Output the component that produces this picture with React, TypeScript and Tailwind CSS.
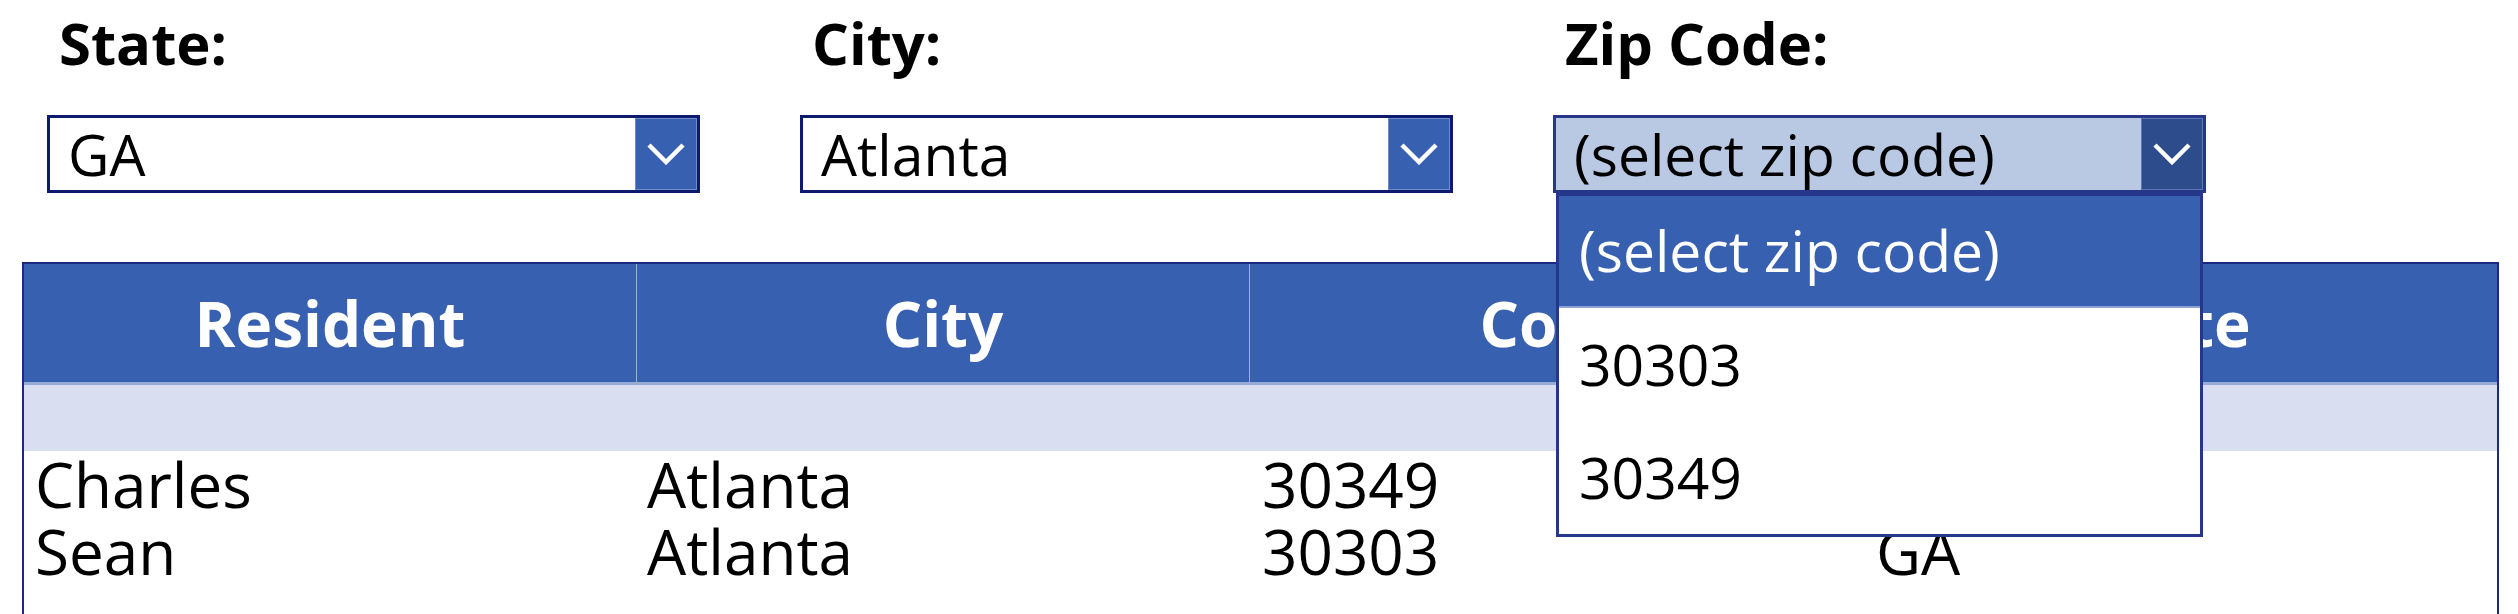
import React from "react"

const rows = [
  { resident: "Charles", city: "Atlanta", code: "30349", state: "GA" },
  { resident: "Sean", city: "Atlanta", code: "30303", state: "GA" },
]

const zipOptions = ["(select zip code)", "30303", "30349"]

const Chevron = () => (
  <svg width="38" height="22" viewBox="0 0 38 22" fill="none">
    <polyline points="2,2 19,19 36,2" stroke="white" strokeWidth="4.5" />
  </svg>
)

interface DropdownProps {
  label: string
  value: string
  open?: boolean
}

const Dropdown: React.FC<DropdownProps> = ({ label, value, open }) => {
  return (
    <div className="relative w-[653px]">
      <div className="pl-[12px] pt-[14px] text-[58px] font-bold leading-[58px] text-black">{label}</div>
      <div
        className={
          open
            ? "mt-[43px] flex h-[78px] border-[3px] border-[#26378a] bg-[#b9c9e3]"
            : "mt-[43px] flex h-[78px] border-[3px] border-[#0e1a6c] bg-white"
        }
      >
        <div className="flex flex-1 items-center pl-[18px] text-[57px] leading-none text-black">{value}</div>
        <div
          className={
            open
              ? "flex w-[62px] items-center justify-center border border-[#5a78b8] bg-[#2d4c8c]"
              : "flex w-[62px] items-center justify-center border border-[#6f8cc8] bg-[#3860b0]"
          }
        >
          <Chevron />
        </div>
      </div>
      {open && (
        <div className="absolute left-[3px] right-[3px] top-[193px] z-10 flex flex-col border-[3px] border-[#26378a] bg-white">
          {zipOptions.map((opt, i) => (
            <div
              key={opt}
              className={
                i === 0
                  ? "flex h-[112px] items-center border-b-2 border-[#8ea2d2] bg-[#3860b0] pl-[20px] text-[57px] text-white"
                  : "flex h-[113px] items-center pl-[20px] text-[57px] text-black"
              }
            >
              {opt}
            </div>
          ))}
        </div>
      )}
    </div>
  )
}

export default function App() {
  return (
    <div className="relative h-[614px] w-[2518px] overflow-hidden bg-white font-['Open_Sans',sans-serif]">
      <div className="flex gap-[100px] pl-[47px]">
        <Dropdown label="State:" value="GA" />
        <Dropdown label="City:" value="Atlanta" />
        <Dropdown label="Zip Code:" value="(select zip code)" open />
      </div>

      <div className="ml-[22px] mt-[69px] h-[400px] w-[2477px] border-x-2 border-t-2 border-[#1b2a80]">
        <div className="grid h-[121px] grid-cols-[612px_613px_614px_612px_1fr] border-b-[3px] border-[#98aad6] bg-[#3860b0] text-[62px] font-bold text-white">
          <div className="flex items-center justify-center">Resident</div>
          <div className="flex items-center justify-center border-l border-[#9db0dc]">City</div>
          <div className="flex items-center justify-center border-l border-[#9db0dc]">Code</div>
          <div className="flex items-center justify-center border-l border-[#9db0dc]">State</div>
          <div />
        </div>
        <div className="h-[66px] bg-[#d9dff0]" />
        <div className="flex flex-col">
          {rows.map((r) => (
            <div
              key={r.resident}
              className="grid grid-cols-[612px_613px_614px_1fr] text-[62px] leading-[67px] text-black"
            >
              <div className="pl-[11px]">{r.resident}</div>
              <div className="pl-[11px]">{r.city}</div>
              <div className="pl-[13px]">{r.code}</div>
              <div className="pl-[13px]">{r.state}</div>
            </div>
          ))}
        </div>
      </div>
    </div>
  )
}
